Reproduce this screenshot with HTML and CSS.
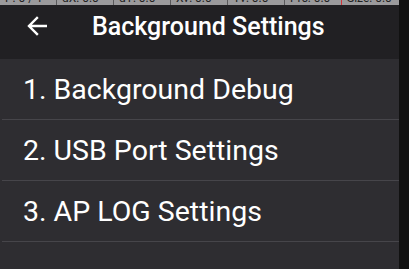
FILE: index.html
```html
<!DOCTYPE html>
<html>
<head>
<meta charset="utf-8">
<link rel="stylesheet" href="styles.css">
</head>
<body>
<div class="screen">
  <div class="strip">
    <span class="cell">P: 0 / 1</span>
    <span class="cell">dX: 0.0</span>
    <span class="cell">dY: 0.0</span>
    <span class="cell">Xv: 0.0</span>
    <span class="cell">Yv: 0.0</span>
    <span class="cell cell-red">Prs: 0.0</span>
    <span class="cell last">Size: 0.0</span>
  </div>
  <div class="app">
    <header class="bar">
      <svg class="back" width="20" height="20" viewBox="0 0 20 20">
        <path d="M19 10H2.5M10 2L2 10l8 8" fill="none" stroke="#ffffff" stroke-width="2.4" stroke-linecap="square"/>
      </svg>
      <h1 class="title">Background Settings</h1>
    </header>
    <ul class="list">
      <li class="item">1. Background Debug</li>
      <li class="item">2. USB Port Settings</li>
      <li class="item">3. AP LOG Settings</li>
      <li class="item empty"></li>
    </ul>
  </div>
</div>
</body>
</html>
```
FILE: styles.css
```css
html, body {
  margin: 0;
  padding: 0;
  background: #111111;
  height: 100%;
  overflow: hidden;
}
.screen {
  width: 399px;
  height: 269px;
  overflow: hidden;
  display: flex;
  flex-direction: column;
  background: #2e2d31;
  font-family: Roboto, "Liberation Sans", sans-serif;
}
.strip {
  height: 5px;
  overflow: hidden;
  display: flex;
  background: #9b9a9c;
  flex: none;
}
.cell {
  flex: 0 0 57px;
  height: 13px;
  margin-top: -8px;
  padding-left: 5px;
  box-sizing: border-box;
  border-right: 1px solid #5a595b;
  font-size: 12px;
  line-height: 13px;
  color: #222222;
  white-space: nowrap;
  overflow: hidden;
}
.cell-red {
  border-right-color: #d0343a;
}
.cell.last {
  border-right: none;
  flex: 1;
}
.app {
  flex: 1;
  display: flex;
  flex-direction: column;
}
.bar {
  height: 54px;
  background: #212023;
  display: flex;
  align-items: center;
  flex: none;
}
.back {
  margin-left: 27px;
  margin-top: -12px;
}
.title {
  margin: -12px 0 0 45px;
  font-size: 25px;
  font-weight: 500;
  color: #ffffff;
  letter-spacing: 0;
}
.list {
  list-style: none;
  margin: 0;
  padding: 0;
}
.item {
  height: 60px;
  display: flex;
  align-items: center;
  padding-left: 21px;
  margin-left: 2px;
  border-bottom: 1px solid #46454a;
  font-size: 28.5px;
  color: #ffffff;
}
.item.empty {
  border-bottom: none;
}
```
